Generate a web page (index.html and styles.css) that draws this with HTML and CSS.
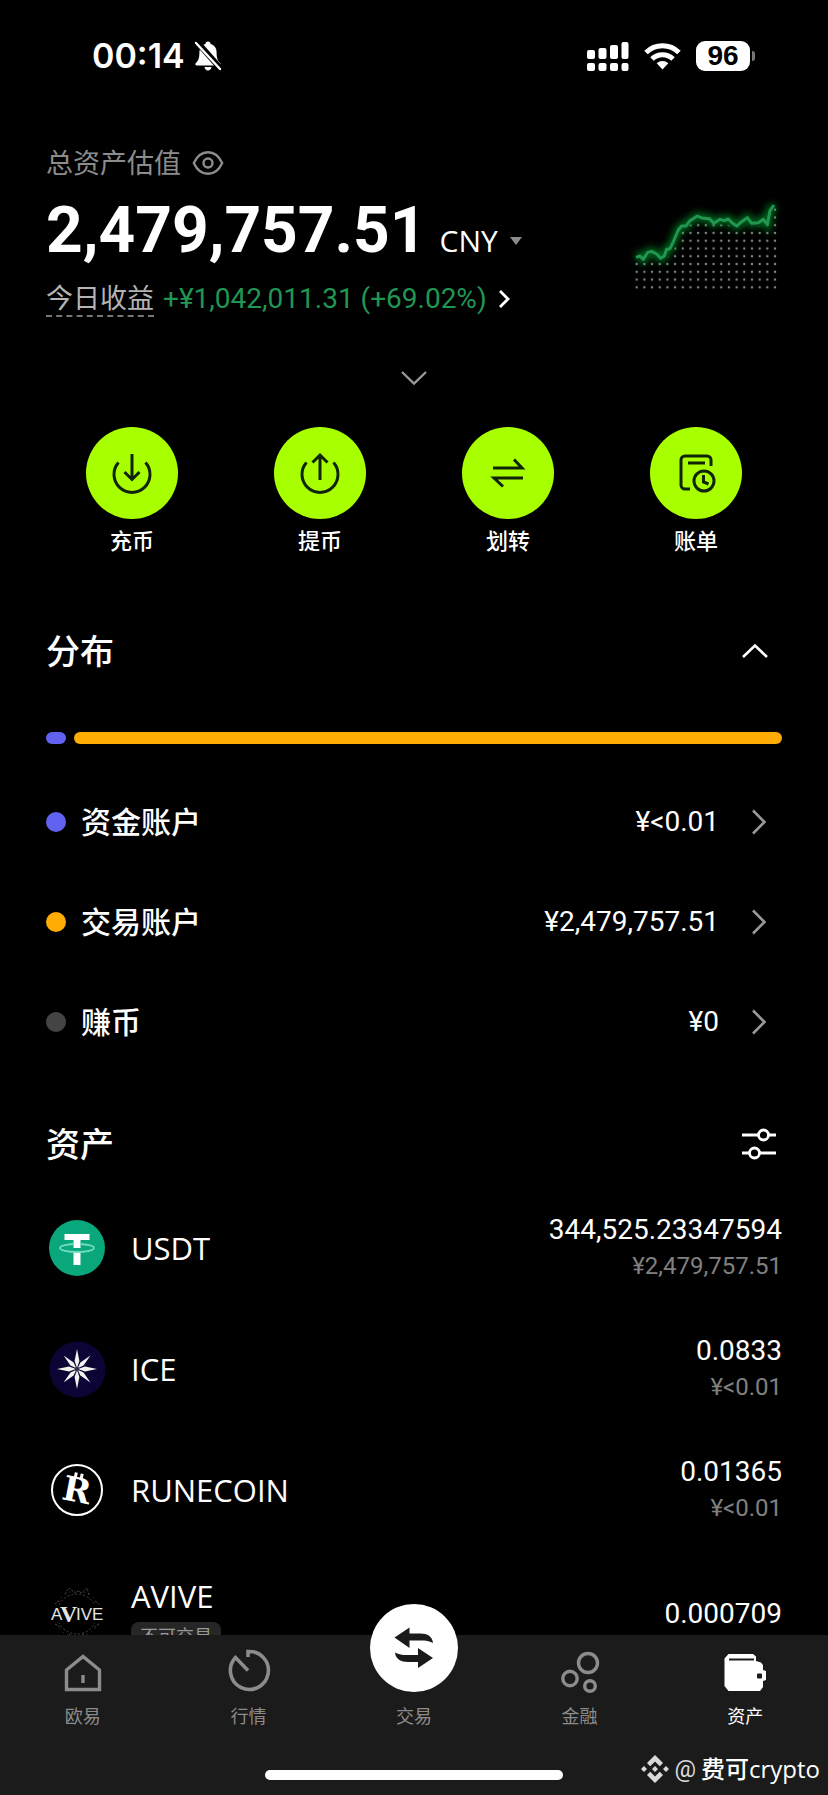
FILE: index.html
```html
<!DOCTYPE html>
<html lang="zh-CN">
<head>
<meta charset="utf-8">
<meta name="viewport" content="width=device-width, initial-scale=1">
<title>资产</title>
<link rel="stylesheet" href="styles.css">
</head>
<body>
<div class="app">
  <header class="status">
    <div class="status-left">
      <time class="clock">00:14</time>
      <svg width="28" height="30" viewBox="0 0 28 30" aria-hidden="true">
        <path d="M14 0.500c1.600 0 2.500 1 2.600 2.400 4 1.200 6 4.400 6 8.600 0 6 1.200 8.200 3.600 10.500.9 1 .4 2.500-1 2.500H2.800c-1.400 0-1.900-1.500-1-2.500C4.200 19.700 5.400 17.500 5.400 11.500c0-4.200 2-7.400 6-8.600C11.500 1.500 12.400.5 14 .5z" fill="#fff"/>
        <path d="M10.500 26h7c-.3 2-1.700 3.500-3.500 3.500S10.800 28 10.500 26z" fill="#fff"/>
        <path d="M3 1l24 27" stroke="#000" stroke-width="6"/>
        <path d="M2 2l24 26" stroke="#fff" stroke-width="2.400" stroke-linecap="round"/>
      </svg>
    </div>
    <div class="status-right">
      <svg width="42" height="30" viewBox="0 0 42 30" fill="#fff" aria-hidden="true">
        <rect x="0" y="9" width="8" height="9" rx="2"/><rect x="11.500" y="7" width="8" height="11" rx="2"/><rect x="23" y="4" width="8" height="14" rx="2"/><rect x="34.500" y="1" width="7" height="17" rx="2"/>
        <rect x="0" y="22" width="8" height="8" rx="2"/><rect x="11.500" y="22" width="8" height="8" rx="2"/><rect x="23" y="22" width="8" height="8" rx="2"/><rect x="34.500" y="22" width="7" height="8" rx="2"/>
      </svg>
      <svg width="37" height="28" viewBox="0 0 37 28" aria-hidden="true">
        <g fill="none" stroke="#fff" stroke-width="5"><path d="M2 10.500a23.500 23.500 0 0 1 33 0"/><path d="M8 17a15 15 0 0 1 21 0"/></g>
        <path d="M18.500 27.500l-5.800-6.200a8.400 8.400 0 0 1 11.600 0z" fill="#fff"/>
      </svg>
      <div class="battery"><span class="battery-level">96</span><span class="battery-tip"></span></div>
    </div>
  </header>

  <main class="content">
    <section class="summary">
      <div class="summary-text">
        <div class="label-row">
          <span>总资产估值</span>
          <button class="plain" aria-label="隐藏资产">
            <svg width="32" height="26" viewBox="0 0 32 26" fill="none" stroke="#8c8c8c" stroke-width="2.400"><path d="M1.800 13C5 6 10 2.200 16 2.200S27 6 30.200 13C27 20 22 23.800 16 23.800S5 20 1.800 13z"/><circle cx="16" cy="13" r="4.500"/></svg>
          </button>
        </div>
        <div class="balance">
          <strong class="amount">2,479,757.51</strong>
          <button class="plain currency">CNY<span class="caret"></span></button>
        </div>
        <div class="profit">
          <span class="profit-label">今日收益</span>
          <a class="profit-value" href="#pnl">+¥1,042,011.31 (+69.02%)
            <svg width="12" height="20" viewBox="0 0 12 20" fill="none" stroke="#fff" stroke-width="2.800"><path d="M2 2l8 8-8 8"/></svg>
          </a>
        </div>
      </div>
      <svg class="trend" width="146" height="92" viewBox="78 60 438 276" role="img" aria-label="资产走势">
        <defs>
          <pattern id="dots" x="68.500" y="310.300" width="23.060" height="23.300" patternUnits="userSpaceOnUse"><circle cx="11.500" cy="11.600" r="3.600" fill="#7f8a80"/></pattern>
          <filter id="glow" x="-20%" y="-30%" width="140%" height="170%"><feGaussianBlur stdDeviation="11"/></filter>
        </defs>
        <path d="M70 240L125 232 160 245 190 215 215 145 262 125 300 128 380 140 470 138 482 85 504 75V332H70z" fill="url(#dots)"/>
        <path d="M78 232l12-4 10 10 12-20 13-4 15 8 12 13 11-7 7-20 10-2 10-21 15-35 10-12h13l12-16 22-14 13 6 23 2 14 14 18-12 13 4 12-5 13 13 12 8 15-13 17-12 13 17 20-2 15-10 12 16 8-42 12-17" fill="none" stroke="#00b030" stroke-opacity=".6" stroke-width="24" filter="url(#glow)"/>
        <path d="M78 232l12-4 10 10 12-20 13-4 15 8 12 13 11-7 7-20 10-2 10-21 15-35 10-12h13l12-16 22-14 13 6 23 2 14 14 18-12 13 4 12-5 13 13 12 8 15-13 17-12 13 17 20-2 15-10 12 16 8-42 12-17" fill="none" stroke="#219653" stroke-width="9" stroke-linejoin="round"/>
      </svg>
    </section>

    <button class="plain expand" aria-label="展开">
      <svg width="26" height="16" viewBox="0 0 26 16" fill="none" stroke="#999" stroke-width="2.400"><path d="M1 2l12 11.500L25 2"/></svg>
    </button>

    <nav class="actions" aria-label="快捷操作">
      <button class="plain action"><span class="action-icon"><svg width="44" height="44" viewBox="0 0 44 44"><path d="M8.500 11.500a18 18 0 1 0 27 0M22 3v25M14.500 21l7.500 7.500 7.500-7.500"/></svg></span>充币</button>
      <button class="plain action"><span class="action-icon"><svg width="44" height="44" viewBox="0 0 44 44"><path d="M8.500 11.500a18 18 0 1 0 27 0M22 29V4M14.500 11.500L22 4l7.500 7.500"/></svg></span>提币</button>
      <button class="plain action"><span class="action-icon"><svg width="44" height="44" viewBox="0 0 44 44"><path d="M7 17h29L28 8.500M37 27H8l9 8.500"/></svg></span>划转</button>
      <button class="plain action"><span class="action-icon"><svg width="44" height="44" viewBox="0 0 44 44"><path d="M16 38h-5a4 4 0 0 1-4-4V9a4 4 0 0 1 4-4h22a4 4 0 0 1 4 4v6M14 12h17"/><circle cx="30" cy="30" r="10"/><path d="M29.500 24v7l5 2"/></svg></span>账单</button>
    </nav>

    <section class="distribution">
      <div class="section-head">
        <h2>分布</h2>
        <button class="plain head-chevron" aria-label="收起"><svg width="26" height="16" viewBox="0 0 26 16" fill="none" stroke="#fff" stroke-width="2.600"><path d="M1 14L13 2.500 25 14"/></svg></button>
      </div>
      <div class="split-bar"><span class="split fund"></span><span class="split trade"></span></div>
      <ul class="accounts">
        <li><a class="account" href="#fund"><span class="dot fund"></span><span class="account-name">资金账户</span><span class="account-value">¥&lt;0.01</span><svg width="16" height="26" viewBox="0 0 16 26" class="arrow"><path d="M2 1.500L13.500 13 2 24.500"/></svg></a></li>
        <li><a class="account" href="#trade"><span class="dot trade"></span><span class="account-name">交易账户</span><span class="account-value">¥2,479,757.51</span><svg width="16" height="26" viewBox="0 0 16 26" class="arrow"><path d="M2 1.500L13.500 13 2 24.500"/></svg></a></li>
        <li><a class="account" href="#earn"><span class="dot earn"></span><span class="account-name">赚币</span><span class="account-value">¥0</span><svg width="16" height="26" viewBox="0 0 16 26" class="arrow"><path d="M2 1.500L13.500 13 2 24.500"/></svg></a></li>
      </ul>
    </section>

    <section class="assets">
      <div class="section-head">
        <h2>资产</h2>
        <button class="plain head-filter" aria-label="筛选"><svg width="34" height="34" viewBox="0 0 34 34" fill="none" stroke="#fff" stroke-width="2.800"><path d="M0 8h16M27 8h7M0 26h7M18 26h16"/><circle cx="21.500" cy="8" r="5"/><circle cx="12.500" cy="26" r="5"/></svg></button>
      </div>
      <ul class="asset-list">
        <li class="asset">
          <svg width="58" height="58" viewBox="0 0 58 58" aria-hidden="true"><circle cx="29" cy="29" r="28" fill="#0aa67c"/><path d="M16.500 15h25v6h-9v8h-7v-8h-9zM25.500 32h7v14h-7z" fill="#fff"/><ellipse cx="29" cy="29" rx="17" ry="4" fill="none" stroke="#6fdcc0" stroke-width="1.800"/><path d="M26 22h6v7h-6z" fill="#fff"/></svg>
          <div class="asset-name">USDT</div>
          <div class="asset-figures"><span class="qty">344,525.23347594</span><span class="worth">¥2,479,757.51</span></div>
        </li>
        <li class="asset">
          <svg width="58" height="58" viewBox="0 0 58 58" aria-hidden="true"><circle cx="29.500" cy="29.500" r="28" fill="#0d0436"/>
            <g fill="#f4f2ee"><path d="M29 28l-2.400-7L29 9l2.400 12zM29 30l2.400 7L29 49l-2.400-12z"/><path d="M30 29l7-2.400L49 29l-12 2.400zM28 29l-7 2.400L9 29l12-2.400z"/><path d="M29 28l-2.200-6L29 10l2.200 12zM29 30l2.200 6L29 48l-2.200-12zM30 29l6-2.200L48 29l-12 2.200zM28 29l-6 2.200L10 29l12-2.200z" transform="rotate(45 29 29)"/></g><circle cx="29" cy="29" r="2.200" fill="#332f44"/></svg>
          <div class="asset-name">ICE</div>
          <div class="asset-figures"><span class="qty">0.0833</span><span class="worth">¥&lt;0.01</span></div>
        </li>
        <li class="asset">
          <svg width="58" height="58" viewBox="0 0 58 58" aria-hidden="true"><circle cx="29" cy="29" r="25" fill="#000" stroke="#fff" stroke-width="2"/><g transform="rotate(11 29 29)"><text x="29" y="41" text-anchor="middle" class="rune">R</text><path d="M25 12v6M31 12v6" stroke="#fff" stroke-width="3"/></g></svg>
          <div class="asset-name">RUNECOIN</div>
          <div class="asset-figures"><span class="qty">0.01365</span><span class="worth">¥&lt;0.01</span></div>
        </li>
        <li class="asset tagged">
          <svg width="58" height="58" viewBox="0 0 58 58" aria-hidden="true"><g fill="none" stroke="#4a4a4a"><circle cx="29" cy="30" r="20" stroke-dasharray="2 2"/><circle cx="29" cy="30" r="23" stroke-dasharray="1 4"/><path d="M17 10l4-6 6 5 3-2 3 2 6-5 2 7M7 20l4-3M47 17l5 4M7 40l5 3M51 40l-5 4M21 51l3-2M36 51l-3-2" stroke-dasharray="2 1.500"/></g><path d="M3 21h52v18H3z" fill="#000"/><g class="avive"><text x="3" y="36" class="avive-small">A</text><text x="12" y="38" class="avive-big">V</text><text x="28" y="36" class="avive-small">IVE</text></g></svg>
          <div class="asset-name">AVIVE<span class="tag">不可交易</span></div>
          <div class="asset-figures"><span class="qty">0.000709</span></div>
        </li>
      </ul>
    </section>
  </main>

  <footer class="footer">
    <nav class="tabs" aria-label="主导航">
      <a class="tab" href="#home"><svg width="40" height="40" viewBox="0 0 40 40"><path d="M3.500 36.500V17L20 3.500 36.500 17v19.500z"/><path d="M20 22v8"/></svg>欧易</a>
      <a class="tab" href="#market"><svg width="42" height="44" viewBox="0 0 42 44"><path d="M21 8V2.500A19 19 0 1 1 8.500 8.500L21 21.500" stroke-width="3.600"/></svg>行情</a>
      <a class="tab" href="#swap"><span class="swap"><svg width="40" height="42" viewBox="0 0 40 42"><path d="M.5 10.500L15.500.5v6h11c7 0 12 3 12.500 9.500-4-2-7-2.500-12-2.500H15.500V21z"/><path d="M39 31L24 41v-6H14C7 35 1.500 32 1 25.500c4 2 7 2.500 12 2.500h11V21z"/></svg></span>交易</a>
      <a class="tab" href="#finance"><svg width="40" height="42" viewBox="0 0 40 42"><circle cx="28" cy="12" r="9.500"/><circle cx="10" cy="27.500" r="7.200"/><circle cx="30" cy="35" r="5.300"/></svg>金融</a>
      <a class="tab active" href="#assets" aria-current="page"><svg width="42" height="40" viewBox="0 0 42 40"><path d="M4.500 1H29l3 2.500V8l5 1.500 2 2.500v5l3 1v9l-3 1v6l-3 4H4.500L.5 33V5.500z" class="solid"/><path d="M5 6.500h25" stroke="#1b1b1b" stroke-width="2"/><rect x="33" y="20.500" width="5" height="5" rx="1" fill="#1b1b1b" stroke="none"/></svg>资产</a>
    </nav>
    <div class="home-indicator"></div>
    <div class="watermark"><svg width="28" height="28" viewBox="0 0 28 28" fill="#d9d9d9" aria-hidden="true"><path d="M14 0l8 8-3.200 3.200L14 6.400l-4.800 4.800L6 8zM14 28l8-8-3.200-3.200-4.800 4.800-4.800-4.800L6 20zM14 11l3 3-3 3-3-3zM3 11l3 3-3 3-3-3zM25 11l3 3-3 3-3-3z"/></svg><span class="at">@</span><span class="handle">费可crypto</span></div>
  </footer>
</div>
</body>
</html>
```

FILE: styles.css
```css
* { box-sizing: border-box; }

body {
  margin: 0;
  background: #000;
  color: #fff;
  font-family: "Open Sans", "Noto Sans CJK SC", sans-serif;
}

h2, ul { margin: 0; padding: 0; }
ul { list-style: none; }
a { color: inherit; text-decoration: none; }
svg { display: block; flex: none; overflow: visible; }

.plain {
  padding: 0;
  border: 0;
  background: none;
  color: inherit;
  font: inherit;
}

.app {
  display: flex;
  flex-direction: column;
  height: 100vh;
}

/* status bar */
.status {
  display: flex;
  flex: none;
  justify-content: space-between;
  align-items: center;
  height: 76px;
  padding: 36px 73px 0 92px;
}
.status-left, .status-right { display: flex; align-items: center; }
.status-left { gap: 9px; }
.status-right { gap: 15px; }
.clock { font: 600 34px/40px Inter, sans-serif; }
.battery { display: flex; align-items: center; gap: 2px; }
.battery-level {
  width: 54px;
  border-radius: 9px;
  background: #fff;
  color: #000;
  font: 700 28px/30px "Liberation Sans", sans-serif;
  text-align: center;
}
.battery-tip {
  width: 3px;
  height: 10px;
  border-radius: 0 3px 3px 0;
  background: #777;
}

.content {
  flex: 1;
  min-height: 0;
  overflow-y: auto;
  scrollbar-width: none;
}

/* balance summary */
.summary {
  display: flex;
  justify-content: space-between;
  padding: 67px 46px 0;
}
.label-row {
  display: flex;
  align-items: center;
  gap: 11px;
  height: 40px;
  color: #8c8c8c;
  font-size: 27px;
  line-height: 40px;
}
.balance {
  display: flex;
  align-items: baseline;
  gap: 13px;
  margin-top: 12px;
}
.amount { font: 700 64px/72px Roboto, sans-serif; }
.currency {
  display: flex;
  align-items: center;
  gap: 12px;
  font-size: 30px;
  font-weight: 500;
  line-height: 30px;
}
.caret {
  border: 6px solid transparent;
  border-top: 8px solid #8c8c8c;
  border-bottom: 0;
}
.profit {
  display: flex;
  align-items: center;
  gap: 9px;
  height: 40px;
  margin-top: 12px;
}
.profit-label {
  border-bottom: 2px dashed #777;
  color: #b4b4b4;
  font-size: 27px;
  line-height: 34px;
}
.profit-value {
  display: flex;
  align-items: center;
  gap: 11px;
  color: #219653;
  font: 400 28px/40px Roboto, sans-serif;
}
.trend { align-self: flex-end; margin-bottom: 27px; }

.expand {
  display: flex;
  justify-content: center;
  align-items: center;
  width: 100%;
  height: 40px;
  margin-top: 39px;
}

/* quick actions */
.actions {
  display: grid;
  grid-template-columns: repeat(4, 1fr);
  margin-top: 29px;
  padding: 0 38px;
}
.action {
  display: flex;
  flex-direction: column;
  align-items: center;
  gap: 5px;
  font-size: 22px;
  font-weight: 500;
  line-height: 32px;
}
.action-icon {
  display: grid;
  place-items: center;
  width: 92px;
  height: 92px;
  border-radius: 50%;
  background: #a8ff00;
}
.action-icon svg {
  fill: none;
  stroke: #10240a;
  stroke-width: 3;
}

/* sections */
.distribution { margin-top: 71px; padding: 0 46px; }
.assets { margin-top: 48px; padding: 0 46px; }
.section-head {
  display: flex;
  justify-content: space-between;
  align-items: center;
  height: 48px;
}
.section-head h2 {
  font-size: 34px;
  font-weight: 500;
  line-height: 48px;
}
.head-chevron { padding-right: 14px; }
.head-filter { padding-right: 6px; }

.split-bar {
  display: flex;
  gap: 8px;
  height: 12px;
  margin-top: 57px;
}
.split { border-radius: 6px; }
.split.fund { width: 20px; }
.split.trade { flex: 1; }
.fund { background: #6262f0; }
.trade { background: #ffad05; }
.earn { background: #444; }

.accounts { margin-top: 28px; }
.account {
  display: flex;
  align-items: center;
  height: 100px;
  padding-right: 15px;
}
.dot {
  width: 20px;
  height: 20px;
  border-radius: 50%;
}
.account-name {
  flex: 1;
  margin-left: 15px;
  font-size: 30px;
  font-weight: 500;
  line-height: 40px;
}
.account-value {
  margin-right: 32px;
  font: 400 28px/40px Roboto, sans-serif;
}
.arrow { fill: none; stroke: #999; stroke-width: 2.6; }

.asset-list { margin-top: 19px; }
.asset {
  display: flex;
  align-items: center;
  height: 121px;
  padding-left: 2px;
}
.asset.tagged { height: 126px; }
.asset-name {
  display: flex;
  flex: 1;
  flex-direction: column;
  align-items: flex-start;
  gap: 6px;
  margin-left: 25px;
  font-size: 31px;
  font-weight: 500;
  line-height: 40px;
}
.tag {
  padding: 0 9px;
  border-radius: 8px;
  background: #262626;
  color: #999;
  font-size: 18px;
  font-weight: 400;
  line-height: 28px;
}
.asset-figures {
  display: flex;
  flex-direction: column;
  align-items: flex-end;
  font-family: Roboto, sans-serif;
  line-height: 37px;
}
.qty { font-size: 28px; }
.worth { color: #808080; font-size: 24px; }

.rune { fill: #fff; font: 700 34px "DejaVu Serif", serif; }
.avive { fill: #e4e4e4; }
.avive-small { font: 17px "Liberation Sans", sans-serif; }
.avive-big { font: 700 24px "Liberation Serif", serif; }

/* bottom bar */
.footer {
  position: relative;
  flex: none;
  height: 160px;
  background: #1b1b1b;
}
.tabs { display: grid; grid-template-columns: repeat(5, 1fr); }
.tab {
  position: relative;
  display: flex;
  flex-direction: column;
  justify-content: flex-end;
  align-items: center;
  gap: 10px;
  height: 94px;
  color: #8c8c8c;
  font-size: 18px;
  line-height: 26px;
}
.tab svg { fill: none; stroke: currentColor; stroke-width: 3.4; }
.tab .solid { fill: #fff; stroke: none; }
.tab.active { color: #fff; }
.swap {
  position: absolute;
  top: -31px;
  display: grid;
  place-items: center;
  width: 88px;
  height: 88px;
  border-radius: 50%;
  background: #fff;
}
.tab .swap svg { fill: #1b1b1b; stroke: none; }
.home-indicator {
  width: 36%;
  height: 10px;
  margin: 41px auto 0;
  border-radius: 5px;
  background: #fff;
}
.watermark {
  position: absolute;
  right: 8px;
  bottom: 8px;
  display: flex;
  align-items: center;
  gap: 5px;
  font-size: 24px;
  font-weight: 500;
  line-height: 36px;
  white-space: nowrap;
}
.at { color: #d9d9d9; font-family: Roboto, sans-serif; font-weight: 400; }
```
